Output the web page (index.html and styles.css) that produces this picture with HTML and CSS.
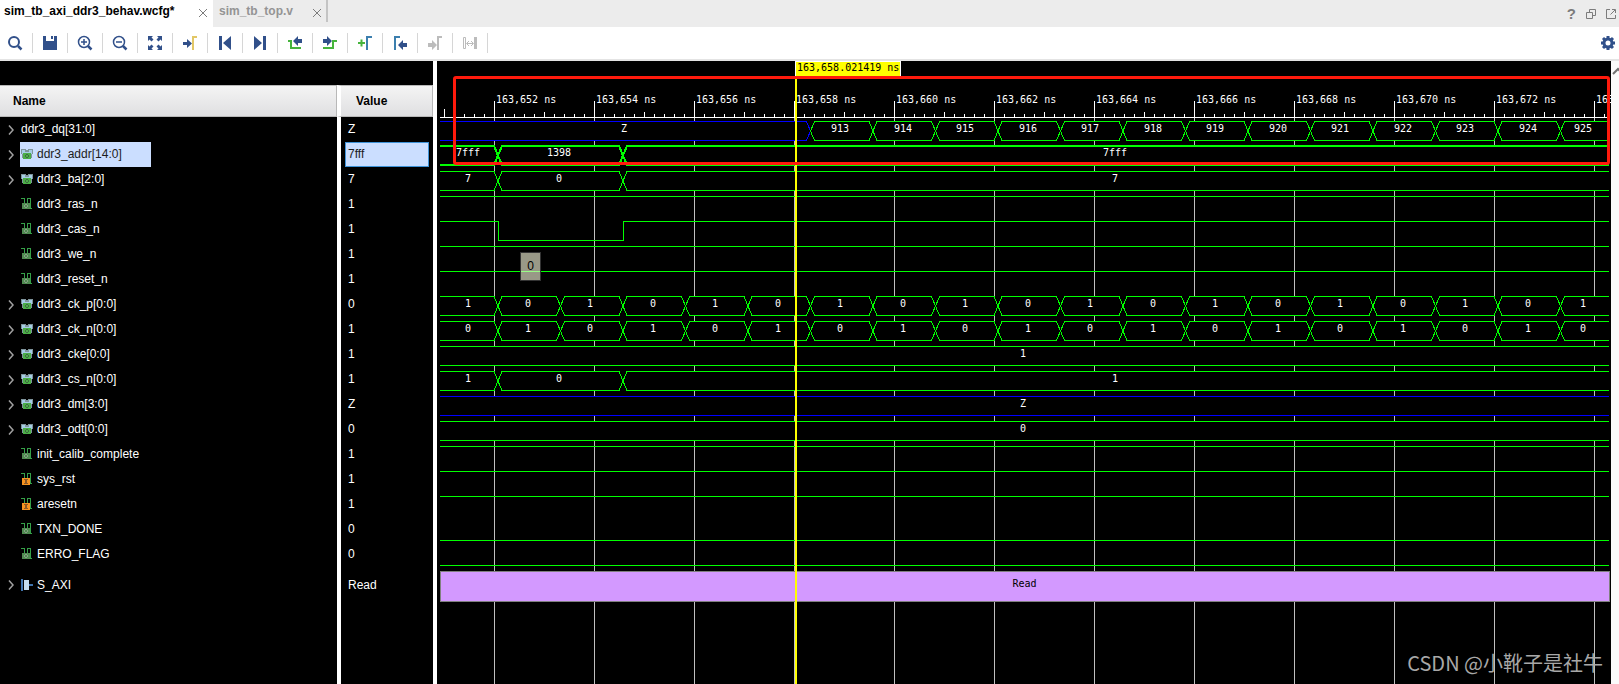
FILE: index.html
```html
<!DOCTYPE html>
<html lang="en">
<head>
    <meta charset="UTF-8">
    <meta name="viewport" content="width=device-width, initial-scale=1.0">
    <title>sim_tb_axi_ddr3_behav.wcfg</title>
    <link rel="stylesheet" href="styles.css">
</head>
<body>

    <!-- icons shared by the signal rows -->
    <svg class="defs" aria-hidden="true">
        <symbol id="icon-chevron" viewBox="0 0 12 12">
            <path d="M4 1.500l4 4.500-4 4.500" fill="none" stroke="#a0a0a0" stroke-width="1.500"/>
        </symbol>
        <symbol id="icon-bus" viewBox="0 0 12 12" shape-rendering="crispEdges">
            <path d="M0 1h5v1h2V1h5v5h-1v4H1V6H0z" fill="#7f949c"/>
            <path d="M1 2h3v2h4V2h3v4H1z" fill="#a5cde4"/>
            <path d="M2 5h8v6H2z" fill="#4cae48"/>
            <path d="M5 6h2v1H5zM5 9h2v1H5zM4 7h1v2H4zM7 7h1v2H7z" fill="#3c6b40"/>
        </symbol>
        <symbol id="icon-wire" viewBox="0 0 12 12" shape-rendering="crispEdges">
            <path d="M0 0h4v6H3V1H0zM6 0h4v10h1v1H9V1H7v5H6z" fill="#35a048"/>
            <path d="M1 5h8v6H1z" fill="#4f8a50"/>
            <path d="M4 6h2v1H4zM4 9h2v1H4zM3 7h1v2H3zM6 7h1v2H6z" fill="#86a186"/>
        </symbol>
        <symbol id="icon-input" viewBox="0 0 12 12" shape-rendering="crispEdges">
            <path d="M0 0h4v6H3V1H0zM6 0h4v10h1v1H9V1H7v5H6z" fill="#35a048"/>
            <path d="M1 5h8v7H1z" fill="#f79420"/>
            <path d="M3 6h4v1H3zM4 7h2v3H4zM3 10h4v1H3z" fill="#8c5a28"/>
        </symbol>
        <symbol id="icon-port" viewBox="0 0 12 12" shape-rendering="crispEdges">
            <path d="M0 0h2v12H0z" fill="#3f73ad"/>
            <path d="M3 1h5v10H3z" fill="#c3dcef"/>
            <path d="M8 5h4v2H8z" fill="#3f73ad"/>
        </symbol>
    </svg>

    <div class="app">
        <header class="tabs">
            <div class="tab active">
                <a href="#wave">sim_tb_axi_ddr3_behav.wcfg*</a>
                <button type="button" class="close" aria-label="Close"><svg width="8" height="8" viewBox="0 0 8 8"><path d="M0 0l8 8M8 0L0 8"/></svg></button>
            </div>
            <div class="tab">
                <a href="#source">sim_tb_top.v</a>
                <button type="button" class="close" aria-label="Close"><svg width="8" height="8" viewBox="0 0 8 8"><path d="M0 0l8 8M8 0L0 8"/></svg></button>
            </div>
            <div class="window-buttons">
                <button type="button" aria-label="Help">?</button>
                <button type="button" aria-label="Restore"><svg width="10" height="10" viewBox="0 0 10 10"><path d="M3.500 3V.5h6v6H7M.5 3.500h6v6h-6z"/></svg></button>
                <button type="button" aria-label="Float"><svg width="10" height="10" viewBox="0 0 10 10"><path d="M4 .5H.5v9h9V6M4.500 5.500L9 1M6 .5h3.500V4"/></svg></button>
            </div>
        </header>

        <div class="toolbar">
            <button type="button" aria-label="Find"><svg viewBox="0 0 16 16"><g fill="none" stroke="#31508a" stroke-width="2"><circle cx="7" cy="7" r="5"/><path d="M11 11l3.500 3.500" stroke-width="2.500"/></g></svg></button>
            <button type="button" aria-label="Save"><svg viewBox="0 0 16 16"><path d="M1 1h3v5h8V1h3v14H1zM9 1h2v3H9z" fill="#31508a"/></svg></button>
            <button type="button" aria-label="Zoom in"><svg viewBox="0 0 16 16"><g fill="none" stroke="#31508a"><circle cx="7" cy="7" r="5.500" stroke-width="1.500"/><path d="M11 11l3.500 3.500" stroke-width="2.500"/><path d="M4 7h6M7 4v6" stroke-width="1.500"/></g></svg></button>
            <button type="button" aria-label="Zoom out"><svg viewBox="0 0 16 16"><g fill="none" stroke="#31508a"><circle cx="7" cy="7" r="5.500" stroke-width="1.500"/><path d="M11 11l3.500 3.500" stroke-width="2.500"/><path d="M4 7h6" stroke-width="1.500"/></g></svg></button>
            <button type="button" aria-label="Zoom fit"><svg viewBox="0 0 16 16"><path d="M1 1h5L4.500 2.500l2 2-2 2-2-2L1 6zM15 1v5l-1.500-1.500-2 2-2-2 2-2L10 1zM1 15v-5l1.500 1.500 2-2 2 2-2 2L6 15zM15 15h-5l1.500-1.500-2-2 2-2 2 2L15 10z" fill="#31508a"/></svg></button>
            <button type="button" aria-label="Go to cursor"><svg viewBox="0 0 16 16"><path d="M1 7h4V4l5 4.500L5 13v-3H1z" fill="#31508a"/><path d="M11 15V2h4" fill="none" stroke="#e2c766" stroke-width="2"/></svg></button>
            <button type="button" aria-label="Go to start"><svg viewBox="0 0 16 16"><path d="M2 1h3v14H2zM14 1v14L6 8z" fill="#31508a"/></svg></button>
            <button type="button" aria-label="Go to end"><svg viewBox="0 0 16 16"><path d="M11 1h3v14h-3zM2 1v14l8-7z" fill="#31508a"/></svg></button>
            <button type="button" aria-label="Previous transition"><svg viewBox="0 0 16 16"><path d="M1 6h3v7h10" fill="none" stroke="#46b43c" stroke-width="2"/><path d="M15 4v4h-4v3L6 6l5-5v3z" fill="#31508a"/></svg></button>
            <button type="button" aria-label="Next transition"><svg viewBox="0 0 16 16"><path d="M1 13h10V6h4" fill="none" stroke="#46b43c" stroke-width="2"/><path d="M1 4v4h4v3l5-5-5-5v3z" fill="#31508a"/></svg></button>
            <button type="button" aria-label="Add marker"><svg viewBox="0 0 16 16"><path d="M1 8h7M4.500 4.500v7" stroke="#46b43c" stroke-width="2"/><path d="M10 15V2h5" fill="none" stroke="#3c7fae" stroke-width="2"/></svg></button>
            <button type="button" aria-label="Previous marker"><svg viewBox="0 0 16 16"><path d="M3 15V2h5" fill="none" stroke="#3c7fae" stroke-width="2"/><path d="M15 8v4h-4v3l-5-5 5-5v3z" fill="#31508a"/></svg></button>
            <button type="button" aria-label="Next marker" disabled><svg viewBox="0 0 16 16"><path d="M1 8h4V5l5 5-5 5v-3H1z" fill="#bcbcbc"/><path d="M11 15V2h4" fill="none" stroke="#bcbcbc" stroke-width="2"/></svg></button>
            <button type="button" aria-label="Swap cursors" disabled><svg viewBox="0 0 16 16"><path d="M1.500 2.500h2v11h-2zM5 8.500h6M7 6L4.500 8.500 7 11M9 6l2.500 2.500L9 11" fill="none" stroke="#bcbcbc"/><path d="M12 2h3v12h-3z" fill="#bcbcbc"/></svg></button>
            <button type="button" class="settings" aria-label="Settings"><svg viewBox="0 0 16 16"><g fill="none" stroke="#31508a"><circle cx="8" cy="8" r="4" stroke-width="3"/><path d="M8 1v2.500M8 12.500V15M1 8h2.500M12.500 8H15M3 3l2 2M11 11l2 2M3 13l2-2M11 5l2-2" stroke-width="3"/></g></svg></button>
        </div>

        <main class="panels" id="wave">
            <div class="signals">
                <table>
                    <thead>
                        <tr><th class="name">Name</th><th class="value">Value</th></tr>
                    </thead>
                    <tbody id="signal-rows"></tbody>
                </table>
            </div>
            <div class="wave-pane" id="wave-pane">
                <svg id="wave-svg"></svg>
                <div class="cursor"></div>
                <div class="cursor-time">163,658.021419 ns</div>
                <div class="hint">0</div>
                <div class="highlight"></div>
                <div class="watermark">CSDN @小靴子是社牛</div>
            </div>
            <div class="scroll">
                <svg width="8" height="8" viewBox="0 0 8 8"><path d="M2 7l5-5 5 5"/></svg>
            </div>
        </main>
    </div>

    <script src="wave.js"></script>
</body>
</html>
```
FILE: styles.css
```css
* {
    box-sizing: border-box;
}
body {
    margin: 0;
    font-family: "Liberation Sans", Arial, sans-serif;
    font-size: 12px;
    color: #000;
}
button {
    margin: 0;
    padding: 0;
    border: 0;
    background: none;
    font: inherit;
    color: inherit;
    cursor: pointer;
}
.defs {
    display: none;
}
.app {
    display: flex;
    flex-direction: column;
    height: 100vh;
}

/* tabs */
.tabs {
    display: flex;
    height: 27px;
    background: #ececec;
}
.tab {
    display: flex;
    justify-content: space-between;
    width: 115px;
    height: 22px;
    padding: 0 5px 0 6px;
    border-right: 2px solid #c4c4c4;
    font-weight: bold;
    line-height: 22px;
}
.tab.active {
    width: 213px;
    height: 27px;
    padding: 0 6px 0 4px;
    border-right: 0;
    background: #fff;
}
.tab a {
    color: #949494;
    text-decoration: none;
}
.tab.active a {
    color: #000;
}
.close {
    display: flex;
    align-items: center;
    height: 26px;
}
.close svg,
.window-buttons svg {
    fill: none;
    stroke: #7c7c7c;
}
.window-buttons {
    display: flex;
    align-items: center;
    gap: 10px;
    margin-left: auto;
    padding-right: 3px;
    color: #7c7c7c;
    font-size: 15px;
    font-weight: bold;
}
.window-buttons button {
    display: flex;
}

/* toolbar */
.toolbar {
    display: flex;
    align-items: center;
    height: 34px;
    border-bottom: 2px solid #e4e4e4;
    background: #fff;
}
.toolbar button {
    display: flex;
    align-items: center;
    justify-content: center;
    width: 35px;
    height: 20px;
    border-right: 1px solid #d6d6d6;
}
.toolbar button:first-child {
    width: 33px;
    padding-right: 2px;
}
.toolbar svg {
    width: 16px;
    height: 16px;
}
.toolbar .settings {
    width: 22px;
    margin-left: auto;
    border-right: 0;
}

/* signal list */
.panels {
    display: flex;
    flex: 1;
    min-height: 0;
    background: #000;
}
.signals {
    width: 437px;
    padding-top: 24px;
    border-right: 4px solid #fff;
    color: #fff;
}
.signals table {
    width: 100%;
    height: 100%;
    border-collapse: separate;
    border-spacing: 0;
    table-layout: fixed;
}
.signals th {
    height: 32px;
    padding: 0 12px;
    border: 1px solid #b8b8b8;
    background: linear-gradient(#f4f4f4, #dfdfe1);
    color: #000;
    text-align: left;
}
.signals th.name {
    width: 337px;
    border-left: 0;
    padding-left: 13px;
}
.signals th.value {
    padding-left: 15px;
    border-left: 4px solid #fff;
}
.signals td {
    height: 25px;
    padding: 0;
}
.signals td.value {
    padding: 0 4px;
    border-left: 4px solid #fff;
}
.signals .group td {
    height: 36px;
}
.signals .filler td {
    height: auto;
}
.name-cell {
    display: flex;
    align-items: center;
    height: 25px;
}
.expand {
    display: flex;
    justify-content: center;
    width: 20px;
    padding-left: 2px;
}
.expand svg,
.label svg {
    width: 12px;
    height: 12px;
}
.label {
    display: flex;
    align-items: center;
    gap: 4px;
    height: 25px;
    padding: 0 0 1px 1px;
    line-height: 24px;
}
.value-cell {
    height: 25px;
    padding: 0 3px;
    line-height: 24px;
}
.selected .label {
    padding-right: 29px;
    background: #cbdeff;
    color: #1c1c1c;
}
.selected .value-cell {
    border: 1px solid #3f93d8;
    padding: 0 2px;
    background: #cbdeff;
    color: #1c1c1c;
    line-height: 22px;
}

/* waveforms */
.wave-pane {
    position: relative;
    flex: 1;
    min-width: 0;
    overflow: hidden;
}
#wave-svg {
    display: block;
    width: 100%;
    height: 100%;
    font-family: "DejaVu Sans Mono", monospace;
    font-size: 10px;
}
#wave-svg path {
    shape-rendering: crispEdges;
}
#wave-svg text {
    fill: #fff;
}
#wave-svg .transaction {
    fill: #000;
}
.middle {
    text-anchor: middle;
}
.grid {
    stroke: #c0c0c0;
}
.ruler {
    stroke: #fff;
}
.high {
    fill: none;
    stroke: #0f0;
}
.bus {
    fill: none;
    stroke: #0f0;
}
.bus.bold {
    stroke-width: 2;
}
.bus.z {
    stroke: #00f;
}
.read {
    fill: #d399ff;
    stroke: #808080;
}
.cursor {
    position: absolute;
    top: 0;
    bottom: 0;
    left: 358px;
    width: 2px;
    background: #ff0;
}
.cursor-time {
    position: absolute;
    top: 0;
    left: 358px;
    height: 16px;
    padding: 0 1px;
    border: 1px solid #fff;
    background: #ff0;
    font-family: "DejaVu Sans Mono", monospace;
    font-size: 10px;
    line-height: 12px;
}
.hint {
    position: absolute;
    top: 191px;
    left: 83px;
    width: 21px;
    height: 29px;
    border: 1px solid #333;
    background: rgba(255, 255, 225, 0.6);
    line-height: 26px;
    text-align: center;
}
.highlight {
    position: absolute;
    top: 15px;
    left: 16px;
    right: 1px;
    height: 89px;
    border: 3px solid #ff1a0c;
    border-radius: 3px;
}
.watermark {
    position: absolute;
    right: 8px;
    bottom: 7px;
    color: #a8a8a8;
    font-family: "Noto Sans CJK SC", sans-serif;
    font-size: 20px;
    line-height: 28px;
}
.scroll {
    width: 8px;
    padding-top: 3px;
    background: #fafafa;
}
.scroll svg {
    fill: none;
    stroke: #707070;
    stroke-width: 2;
}
```
FILE: wave.js
```js
const ROW = 25;
const TOP = 56;
const LEFT = 3;
const FIRST = 61;      // x of the first clock edge
const HALF = 62.5;     // half a clock period

// edges are counted in half clock periods from FIRST
function clock(start) {
    const cells = [{ text: String(start) }];
    for (let i = 0; i < 18; i++) {
        cells.push({ at: i, text: String((start + i + 1) % 2) });
    }
    return cells;
}

const data = [{ text: 'Z', z: true }];
for (let i = 0; i < 13; i++) {
    data.push({ at: 5 + i, text: String(913 + i) });
}

const signals = [
    { name: 'ddr3_dq[31:0]', value: 'Z', cells: data },
    { name: 'ddr3_addr[14:0]', value: '7fff', icon: 'bus', selected: true, cells: [{ text: '7fff' }, { at: 0, text: '1398' }, { at: 2, text: '7fff' }] },
    { name: 'ddr3_ba[2:0]', value: '7', icon: 'bus', cells: [{ text: '7' }, { at: 0, text: '0' }, { at: 2, text: '7' }] },
    { name: 'ddr3_ras_n', value: '1', icon: 'wire' },
    { name: 'ddr3_cas_n', value: '1', icon: 'wire', pulse: true },
    { name: 'ddr3_we_n', value: '1', icon: 'wire' },
    { name: 'ddr3_reset_n', value: '1', icon: 'wire' },
    { name: 'ddr3_ck_p[0:0]', value: '0', icon: 'bus', cells: clock(1) },
    { name: 'ddr3_ck_n[0:0]', value: '1', icon: 'bus', cells: clock(0) },
    { name: 'ddr3_cke[0:0]', value: '1', icon: 'bus', cells: [{ text: '1' }] },
    { name: 'ddr3_cs_n[0:0]', value: '1', icon: 'bus', cells: [{ text: '1' }, { at: 0, text: '0' }, { at: 2, text: '1' }] },
    { name: 'ddr3_dm[3:0]', value: 'Z', icon: 'bus', cells: [{ text: 'Z', z: true }] },
    { name: 'ddr3_odt[0:0]', value: '0', icon: 'bus', cells: [{ text: '0' }] },
    { name: 'init_calib_complete', value: '1', icon: 'wire' },
    { name: 'sys_rst', value: '1', icon: 'input' },
    { name: 'aresetn', value: '1', icon: 'input' },
    { name: 'TXN_DONE', value: '0', icon: 'wire' },
    { name: 'ERRO_FLAG', value: '0', icon: 'wire' },
    { name: 'S_AXI', value: 'Read', icon: 'port', group: true }
];

function drawRows() {
    let html = '';
    signals.forEach(s => {
        const expand = s.cells || s.group
            ? `<button type="button" class="expand" aria-label="Expand ${s.name}"><svg><use href="#icon-chevron"/></svg></button>`
            : '<span class="expand"></span>';
        const icon = s.icon ? `<svg><use href="#icon-${s.icon}"/></svg>` : '';
        html += `<tr class="${s.selected ? 'selected' : ''}${s.group ? 'group' : ''}">
            <td><div class="name-cell">${expand}<span class="label">${icon}${s.name}</span></div></td>
            <td class="value"><div class="value-cell">${s.value}</div></td>
        </tr>`;
    });
    html += '<tr class="filler"><td></td><td class="value"></td></tr>';
    document.getElementById('signal-rows').innerHTML = html;
}

function drawBus(s, hi, lo, right) {
    const mid = (hi + lo) / 2;
    let out = '';
    s.cells.forEach((cell, i) => {
        const next = s.cells[i + 1];
        const x0 = i === 0 ? LEFT : FIRST + cell.at * HALF;
        const x1 = next ? FIRST + next.at * HALF : right;
        if (x0 >= right) return;
        // open at the sides of the pane, pointed at a transition
        let d = next ? `M${x1} ${mid}L${x1 - 4} ${hi}` : `M${x1} ${hi}`;
        d += i === 0 ? `H${x0}M${x0} ${lo}` : `H${x0 + 4}L${x0} ${mid}L${x0 + 4} ${lo}`;
        d += next ? `H${x1 - 4}L${x1} ${mid}` : `H${x1}`;
        out += `<path fill="#000" d="M${x0} ${hi}H${x1}V${lo}H${x0}z"/>`;
        out += `<path class="bus ${cell.z ? 'z' : ''} ${s.selected ? 'bold' : ''}" d="${d}"/>`;
        out += `<text class="middle" x="${Math.floor((x0 + x1) / 2) - 1}" y="${Math.round(hi + 10)}">${cell.text}</text>`;
    });
    return out;
}

function drawWave() {
    const pane = document.getElementById('wave-pane');
    const width = pane.clientWidth;
    const height = pane.clientHeight;
    const right = width - 2;
    let out = '';

    // ruler, one tick each 0.2 ns
    let ticks = `M${LEFT} ${TOP + 0.5}H${right}M7.5 48V56`;
    let grid = '';
    for (let x = 27; x < right; x += 10) {
        let top = 53;
        if ((x - 57) % 100 === 0) {
            top = 40;
            grid += `M${x + 0.5} 57V${height}`;
            out += `<text x="${x + 2}" y="42">163,${652 + (x - 57) / 50} ns</text>`;
        } else if ((x - 7) % 100 === 0) {
            top = 51;
        }
        ticks += `M${x + 0.5} ${top}V56`;
    }
    out += `<path class="grid" d="${grid}"/><path class="ruler" d="${ticks}"/>`;

    signals.forEach((s, i) => {
        const hi = TOP + i * ROW + 4.5;
        const lo = hi + 19;
        if (s.group) {
            out += `<path class="read" d="M${LEFT} ${hi}H${right}V${hi + 30}H${LEFT}z"/>`;
            out += `<text class="middle transaction" x="${(LEFT + right) / 2}" y="${Math.round(hi + 15)}">${s.value}</text>`;
        } else if (s.cells) {
            // the selected bus has a two pixel outline
            out += s.selected ? drawBus(s, hi - 0.5, lo - 0.5, right) : drawBus(s, hi, lo, right);
        } else if (s.pulse) {
            out += `<path class="high" d="M${LEFT} ${hi}H${FIRST + 0.5}V${lo}H${FIRST + 2 * HALF + 0.5}V${hi}H${right}"/>`;
        } else {
            const y = s.value === '1' ? hi : lo;
            out += `<path class="high" d="M${LEFT} ${y}H${right}"/>`;
        }
    });
    document.getElementById('wave-svg').innerHTML = out;
}

drawRows();
drawWave();
window.addEventListener('resize', drawWave);
```
